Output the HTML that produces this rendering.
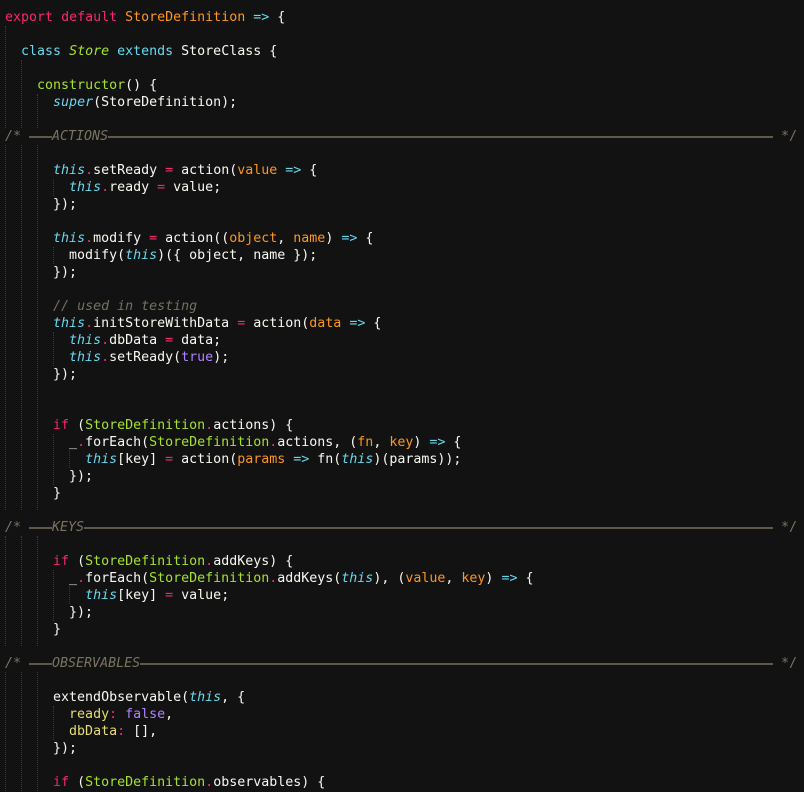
<!DOCTYPE html>
<html><head><meta charset="utf-8">
<style>
html,body{margin:0;padding:0;background:#121212;width:804px;height:792px;overflow:hidden}
#c{position:relative;padding-top:9px;font-family:"DejaVu Sans Mono","Liberation Mono",monospace;font-size:13.3px;color:#f8f8f2}
.l{height:17px;line-height:17px;white-space:pre;padding-left:5px;position:relative;z-index:1}
.k{color:#f92672}.o{color:#fd971f}.t{color:#66d9ef;font-style:italic}.c{color:#66d9ef}
.g{color:#a6e22e}.gi{color:#a6e22e;font-style:italic}.p{color:#ae81ff}.y{color:#e6db74}
.cm{color:#75715e;font-style:italic}
.cl{display:flex;align-items:center;color:#7a7360;font-style:italic}
.d{border-top:2px solid #5f5949;height:0;margin-top:1px}
.gd{position:absolute;width:0;border-left:1px dotted #3a3a3a;z-index:0}
</style></head><body><div id="c">
<div class="gd" style="left:5px;top:26px;height:102px"></div>
<div class="gd" style="left:21px;top:60px;height:68px"></div>
<div class="gd" style="left:37px;top:94px;height:34px"></div>
<div class="gd" style="left:5px;top:145px;height:365px"></div>
<div class="gd" style="left:21px;top:145px;height:365px"></div>
<div class="gd" style="left:37px;top:145px;height:365px"></div>
<div class="gd" style="left:5px;top:536px;height:110px"></div>
<div class="gd" style="left:21px;top:536px;height:110px"></div>
<div class="gd" style="left:37px;top:536px;height:110px"></div>
<div class="gd" style="left:5px;top:672px;height:121px"></div>
<div class="gd" style="left:21px;top:672px;height:121px"></div>
<div class="gd" style="left:37px;top:672px;height:121px"></div>
<div class="gd" style="left:53px;top:179px;height:17px"></div>
<div class="gd" style="left:53px;top:247px;height:17px"></div>
<div class="gd" style="left:53px;top:332px;height:34px"></div>
<div class="gd" style="left:53px;top:434px;height:51px"></div>
<div class="gd" style="left:69px;top:451px;height:17px"></div>
<div class="gd" style="left:53px;top:570px;height:51px"></div>
<div class="gd" style="left:69px;top:587px;height:17px"></div>
<div class="gd" style="left:53px;top:706px;height:34px"></div>

<div class="l"><span class="k">export</span> <span class="k">default</span> <span class="o">StoreDefinition</span> <span class="c">=&gt;</span> {</div>
<div class="l"></div>
<div class="l">  <span class="c">class</span> <span class="gi">Store</span> <span class="c">extends</span> StoreClass {</div>
<div class="l"></div>
<div class="l">    <span class="g">constructor</span>() {</div>
<div class="l">      <span class="t">super</span>(StoreDefinition);</div>
<div class="l"></div>
<div class="l cl"><span style="white-space:pre">/* </span><span class="d" style="width:23px"></span><span>ACTIONS</span><span class="d" style="flex:1"></span><span style="white-space:pre;font-style:normal;margin-right:7px"> */</span></div>
<div class="l"></div>
<div class="l">      <span class="t">this</span><span class="k">.</span>setReady <span class="k">=</span> action(<span class="o">value</span> <span class="c">=&gt;</span> {</div>
<div class="l">        <span class="t">this</span><span class="k">.</span>ready <span class="k">=</span> value;</div>
<div class="l">      });</div>
<div class="l"></div>
<div class="l">      <span class="t">this</span><span class="k">.</span>modify <span class="k">=</span> action((<span class="o">object</span>, <span class="o">name</span>) <span class="c">=&gt;</span> {</div>
<div class="l">        modify(<span class="t">this</span>)({ object, name });</div>
<div class="l">      });</div>
<div class="l"></div>
<div class="l">      <span class="cm">// used in testing</span></div>
<div class="l">      <span class="t">this</span><span class="k">.</span>initStoreWithData <span class="k">=</span> action(<span class="o">data</span> <span class="c">=&gt;</span> {</div>
<div class="l">        <span class="t">this</span><span class="k">.</span>dbData <span class="k">=</span> data;</div>
<div class="l">        <span class="t">this</span><span class="k">.</span>setReady(<span class="p">true</span>);</div>
<div class="l">      });</div>
<div class="l"></div>
<div class="l"></div>
<div class="l">      <span class="k">if</span> (<span class="g">StoreDefinition</span><span class="k">.</span>actions) {</div>
<div class="l">        _<span class="k">.</span>forEach(<span class="g">StoreDefinition</span><span class="k">.</span>actions, (<span class="o">fn</span>, <span class="o">key</span>) <span class="c">=&gt;</span> {</div>
<div class="l">          <span class="t">this</span>[key] <span class="k">=</span> action(<span class="o">params</span> <span class="c">=&gt;</span> fn(<span class="t">this</span>)(params));</div>
<div class="l">        });</div>
<div class="l">      }</div>
<div class="l"></div>
<div class="l cl"><span style="white-space:pre">/* </span><span class="d" style="width:23px"></span><span>KEYS</span><span class="d" style="flex:1"></span><span style="white-space:pre;font-style:normal;margin-right:7px"> */</span></div>
<div class="l"></div>
<div class="l">      <span class="k">if</span> (<span class="g">StoreDefinition</span><span class="k">.</span>addKeys) {</div>
<div class="l">        _<span class="k">.</span>forEach(<span class="g">StoreDefinition</span><span class="k">.</span>addKeys(<span class="t">this</span>), (<span class="o">value</span>, <span class="o">key</span>) <span class="c">=&gt;</span> {</div>
<div class="l">          <span class="t">this</span>[key] <span class="k">=</span> value;</div>
<div class="l">        });</div>
<div class="l">      }</div>
<div class="l"></div>
<div class="l cl"><span style="white-space:pre">/* </span><span class="d" style="width:23px"></span><span>OBSERVABLES</span><span class="d" style="flex:1"></span><span style="white-space:pre;font-style:normal;margin-right:7px"> */</span></div>
<div class="l"></div>
<div class="l">      extendObservable(<span class="t">this</span>, {</div>
<div class="l">        <span class="y">ready</span><span class="k">:</span> <span class="p">false</span>,</div>
<div class="l">        <span class="y">dbData</span><span class="k">:</span> [],</div>
<div class="l">      });</div>
<div class="l"></div>
<div class="l">      <span class="k">if</span> (<span class="g">StoreDefinition</span><span class="k">.</span>observables) {</div>
<div class="l">        _<span class="k">.</span>forEach(<span class="g">StoreDefinition</span><span class="k">.</span>observables, (<span class="o">value</span>, <span class="o">key</span>) <span class="c">=&gt;</span> {</div>
</div></body></html>
